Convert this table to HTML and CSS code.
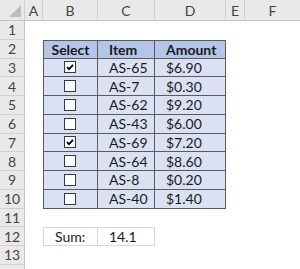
FILE: index.html
```html
<!DOCTYPE html>
<html lang="en">
<head>
    <meta charset="UTF-8">
    <title>Checkbox sum</title>
    <link rel="stylesheet" href="styles.css">
</head>
<body>
    <div class="sheet">
        <div class="row col-heads">
            <div class="corner"><span class="corner-tri"></span></div>
            <div class="ch">A</div>
            <div class="ch">B</div>
            <div class="ch">C</div>
            <div class="ch">D</div>
            <div class="ch">E</div>
            <div class="ch">F</div>
        </div>

        <div class="row"><div class="rh">1</div></div>

        <div class="row">
            <div class="rh">2</div><div></div>
            <div class="cell th first top center">Select</div>
            <div class="cell th top">Item</div>
            <div class="cell th top">Amount</div>
        </div>

        <div class="row">
            <div class="rh">3</div><div></div>
            <div class="cell td first center"><span class="box checked"><svg viewBox="0 0 10 10"><path d="M2 5.2 L4 7.2 L8 2.8"/></svg></span></div>
            <div class="cell td">AS-65</div>
            <div class="cell td">$6.90</div>
        </div>
        <div class="row">
            <div class="rh">4</div><div></div>
            <div class="cell td first center"><span class="box"></span></div>
            <div class="cell td">AS-7</div>
            <div class="cell td">$0.30</div>
        </div>
        <div class="row">
            <div class="rh">5</div><div></div>
            <div class="cell td first center"><span class="box"></span></div>
            <div class="cell td">AS-62</div>
            <div class="cell td">$9.20</div>
        </div>
        <div class="row">
            <div class="rh">6</div><div></div>
            <div class="cell td first center"><span class="box"></span></div>
            <div class="cell td">AS-43</div>
            <div class="cell td">$6.00</div>
        </div>
        <div class="row">
            <div class="rh">7</div><div></div>
            <div class="cell td first center"><span class="box checked"><svg viewBox="0 0 10 10"><path d="M2 5.2 L4 7.2 L8 2.8"/></svg></span></div>
            <div class="cell td">AS-69</div>
            <div class="cell td">$7.20</div>
        </div>
        <div class="row">
            <div class="rh">8</div><div></div>
            <div class="cell td first center"><span class="box"></span></div>
            <div class="cell td">AS-64</div>
            <div class="cell td">$8.60</div>
        </div>
        <div class="row">
            <div class="rh">9</div><div></div>
            <div class="cell td first center"><span class="box"></span></div>
            <div class="cell td">AS-8</div>
            <div class="cell td">$0.20</div>
        </div>
        <div class="row">
            <div class="rh">10</div><div></div>
            <div class="cell td first center"><span class="box"></span></div>
            <div class="cell td">AS-40</div>
            <div class="cell td">$1.40</div>
        </div>

        <div class="row"><div class="rh">11</div></div>

        <div class="row">
            <div class="rh">12</div><div></div>
            <div class="cell sum first">Sum:</div>
            <div class="cell sum">14.1</div>
        </div>

        <div class="row"><div class="rh">13</div></div>
        <div class="row"><div class="rh"></div></div>
    </div>
</body>
</html>
```

FILE: styles.css
```css
:root {
    --cols: 25px 18px 55px 57px 71px 19px 1fr;
    --row-h: 18.75px;
    --head-bg: #e9e9e9;
    --head-line: #d0d0d0;
    --head-text: #444444;
    --th-bg: #b4c6e7;
    --td-bg: #d9e1f2;
    --line: #5b5b5b;
}

* {
    margin: 0;
    padding: 0;
    box-sizing: border-box;
}

body {
    background: #ffffff;
    font-family: Lato, "Open Sans", sans-serif;
    font-size: 14px;
    color: #1a1a1a;
    overflow: hidden;
}

.sheet {
    width: 300px;
    height: 269px;
    overflow: hidden;
}

.row {
    display: grid;
    grid-template-columns: var(--cols);
    height: var(--row-h);
}

.col-heads {
    height: 21px;
    background: var(--head-bg);
    border-bottom: 1px solid #c4c4c4;
}

.corner {
    position: relative;
    border-right: 1px solid var(--head-line);
}

/* little grey triangle in the top-left corner */
.corner-tri {
    position: absolute;
    right: 3px;
    bottom: 3px;
    width: 0;
    height: 0;
    border-left: 12px solid transparent;
    border-bottom: 12px solid #bdbdbd;
}

.ch {
    display: flex;
    align-items: center;
    justify-content: center;
    color: var(--head-text);
    font-size: 14px;
    border-right: 1px solid var(--head-line);
}

.ch:last-child {
    border-right: none;
}

.rh {
    display: flex;
    align-items: center;
    justify-content: center;
    background: var(--head-bg);
    color: var(--head-text);
    font-size: 14px;
    border-right: 1px solid #c4c4c4;
    border-bottom: 1px solid var(--head-line);
}

.cell {
    display: flex;
    align-items: center;
    padding-left: 11px;
    white-space: nowrap;
}

.cell.center {
    justify-content: center;
    padding-left: 0;
}

.th,
.td {
    border-right: 1px solid var(--line);
    border-bottom: 1px solid var(--line);
}

.th {
    background: var(--th-bg);
    font-weight: bold;
}

.td {
    background: var(--td-bg);
}

.first.th,
.first.td {
    border-left: 1px solid var(--line);
}

.top {
    border-top: 1px solid var(--line);
}

.sum {
    border-right: 1px solid #d9d9d9;
    border-top: 1px solid #d9d9d9;
    border-bottom: 1px solid #d9d9d9;
}

.sum.first {
    border-left: 1px solid #d9d9d9;
}

.box {
    display: block;
    width: 12px;
    height: 12px;
    margin-left: -2px;
    background: #ffffff;
    border: 1px solid #3a3a3a;
}

.box svg {
    display: block;
    width: 10px;
    height: 10px;
}

.box path {
    fill: none;
    stroke: #000000;
    stroke-width: 1.8;
}
```
